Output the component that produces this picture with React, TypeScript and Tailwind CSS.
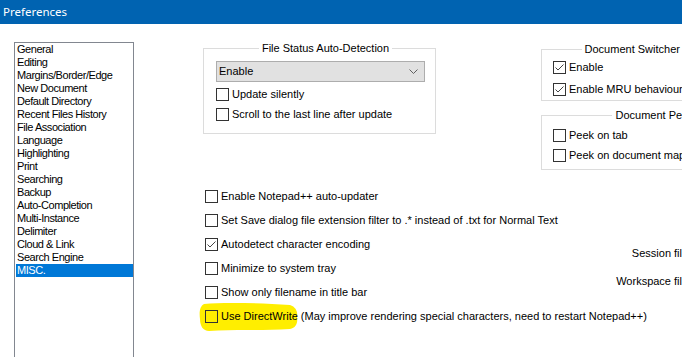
import React from "react";

const categories = [
  "General",
  "Editing",
  "Margins/Border/Edge",
  "New Document",
  "Default Directory",
  "Recent Files History",
  "File Association",
  "Language",
  "Highlighting",
  "Print",
  "Searching",
  "Backup",
  "Auto-Completion",
  "Multi-Instance",
  "Delimiter",
  "Cloud & Link",
  "Search Engine",
  "MISC.",
];

/** Win32 style checkbox */
function Check({ checked = false, label, children }: { checked?: boolean; label: string; children?: React.ReactNode }) {
  return (
    <div className="flex h-[13px] items-center whitespace-nowrap">
      <span className="relative flex h-[13px] w-[13px] shrink-0 items-center justify-center border border-[#333333]">
        {checked && (
          <svg width="11" height="11" viewBox="0 0 11 11" className="block">
            <path d="M1.5 5.5 L4 8 L9.5 2.5" fill="none" stroke="#444" strokeWidth="1" />
          </svg>
        )}
      </span>
      <span className="ml-[3px] leading-[13px]">{label}</span>
      {children}
    </div>
  );
}

function Group({ title, className, children }: { title: string; className?: string; children: React.ReactNode }) {
  return (
    <fieldset className={`border border-[#dcdcdc] ${className ?? ""}`}>
      <legend className="mx-auto px-[3px] leading-[13px]">{title}</legend>
      {children}
    </fieldset>
  );
}

export default function App() {
  return (
    <div className="relative h-[357px] w-[682px] overflow-hidden bg-white font-['Liberation_Sans',Arial,sans-serif] text-[11px] text-black">
      <div className="flex h-[24px] items-center bg-[#0063b1] pl-[3px] font-['Noto_Sans',sans-serif] text-[11.5px] text-white">
        Preferences
      </div>

      <div className="flex">
        {/* category list */}
        <div className="ml-[14px] mt-[18px] h-[345px] w-[120px] shrink-0 border border-[#828790] pl-[1px]">
          {categories.map((c) => (
            <div
              key={c}
              className={`h-[13px] whitespace-nowrap pl-[1px] leading-[13px] tracking-[-0.45px] ${
                c === "MISC." ? "bg-[#0078d7] text-white" : ""
              }`}
            >
              {c}
            </div>
          ))}
        </div>

        {/* MISC. page */}
        <div className="ml-[69px] flex min-w-0 flex-1 flex-col">
          <div className="flex items-start">
            <Group title="File Status Auto-Detection" className="mt-[18px] w-[233px] shrink-0 pb-[12px] pl-[12px]">
              <div className="mt-[6px] flex h-[21px] w-[209px] items-center justify-between border border-[#adadad] bg-[#e1e1e1] pl-[2px] pr-[6px]">
                <span>Enable</span>
                <svg width="9" height="5" viewBox="0 0 9 5">
                  <path d="M0.5 0.5 L4.5 4.5 L8.5 0.5" fill="none" stroke="#606060" strokeWidth="1" />
                </svg>
              </div>
              <div className="mt-[6px] flex flex-col gap-[7px]">
                <Check label="Update silently" />
                <Check label="Scroll to the last line after update" />
              </div>
            </Group>

            <div className="ml-[105px] flex w-[226px] shrink-0 flex-col">
              <Group title="Document Switcher (Ctrl+TAB)" className="mt-[19px] pb-[4px] pl-[11px] pt-[5px]">
                <div className="flex flex-col gap-[9px]">
                  <Check checked label="Enable" />
                  <Check checked label="Enable MRU behaviour" />
                </div>
              </Group>
              <Group title="Document Peeker" className="mt-[8px] pb-[7px] pl-[11px] pt-[7px]">
                <div className="flex flex-col gap-[7px]">
                  <Check label="Peek on tab" />
                  <Check label="Peek on document map" />
                </div>
              </Group>
            </div>
          </div>

          <div className="mt-[20px] flex">
            <div className="ml-[2px] flex min-w-0 flex-1 flex-col gap-[11px]">
              <Check label="Enable Notepad++ auto-updater" />
              <Check label="Set Save dialog file extension filter to .* instead of .txt for Normal Text" />
              <Check checked label="Autodetect character encoding" />
              <Check label="Minimize to system tray" />
              <Check label="Show only filename in title bar" />
              <div className="relative">
                <svg
                  className="absolute left-[-6px] top-[-8px]"
                  width="100"
                  height="30"
                  viewBox="0 0 100 30"
                >
                  <path
                    d="M5 2 C25 0, 60 1, 91 3 C97 5, 99 10, 98 15 C99 21, 97 26, 91 27 C62 29, 34 27, 10 29 C4 29, 1 24, 1 17 C0 10, 1 4, 5 2 Z"
                    fill="#ffee00"
                  />
                </svg>
                <div className="relative">
                  <Check label="Use DirectWrite">
                    <span className="ml-[3px] leading-[13px]">
                      (May improve rendering special characters, need to restart Notepad++)
                    </span>
                  </Check>
                </div>
              </div>
            </div>
            <div className="flex shrink-0 flex-col items-end gap-[15px] pt-[57px] leading-[13px]">
              <span>Session fil</span>
              <span>Workspace fil</span>
            </div>
          </div>
        </div>
      </div>
    </div>
  );
}
